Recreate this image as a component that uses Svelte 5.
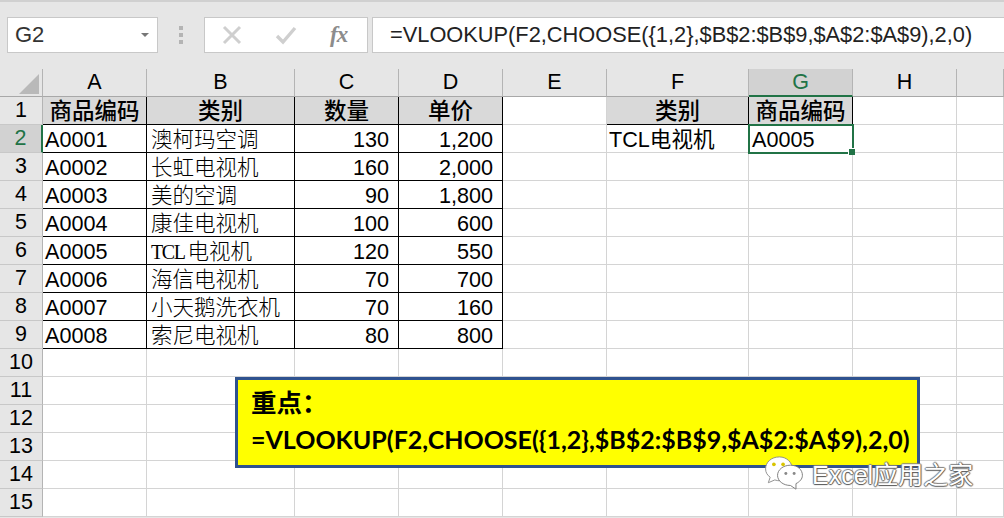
<script>
	const columns = ['A', 'B', 'C', 'D', 'E', 'F', 'G', 'H', ''];
	const products = [
		['A0001', '澳柯玛空调', '130', '1,200'],
		['A0002', '长虹电视机', '160', '2,000'],
		['A0003', '美的空调', '90', '1,800'],
		['A0004', '康佳电视机', '100', '600'],
		['A0005', 'TCL电视机', '120', '550'],
		['A0006', '海信电视机', '70', '700'],
		['A0007', '小天鹅洗衣机', '70', '160'],
		['A0008', '索尼电视机', '80', '800']
	];
	const headers = ['商品编码', '类别', '数量', '单价'];

	// build one row of nine cells from whatever the sheet holds there
	const cellsFor = (r) => {
		const cells = columns.map(() => ({ text: '', cls: '' }));
		if (r === 1) {
			headers.forEach((h, i) => (cells[i] = { text: h, cls: 'head ruled' }));
			cells[5] = { text: '类别', cls: 'head ruled' };
			cells[6] = { text: '商品编码', cls: 'head ruled' };
		}
		if (r >= 2 && r <= 9) {
			const p = products[r - 2];
			cells[0] = { text: p[0], cls: 'ruled' };
			cells[1] = { text: p[1], cls: 'ruled song' };
			cells[2] = { text: p[2], cls: 'ruled num' };
			cells[3] = { text: p[3], cls: 'ruled num' };
		}
		if (r === 2) {
			cells[5] = { text: 'TCL电视机', cls: '' };
			cells[6] = { text: 'A0005', cls: 'active' };
		}
		return cells;
	};
	const rows = Array.from({ length: 15 }, (_, i) => i + 1);
	// the category column sets its latin letters small, half width
	const latinLead = (text) => text.match(/^[A-Z]+/)?.[0] ?? '';
</script>

<div class="app">
	<div class="toolbar">
		<div class="namebox">
			<span>G2</span>
			<i class="caret"></i>
		</div>
		<div class="grip"><b></b><b></b><b></b></div>
		<div class="fxbox">
			<svg width="24" height="20" viewBox="0 0 24 20">
				<path d="M4 2 L20 18 M20 2 L4 18" stroke="#cfcfcf" stroke-width="3" fill="none" />
			</svg>
			<svg width="24" height="20" viewBox="0 0 24 20">
				<path d="M3 11 L9 17 L21 3" stroke="#cfcfcf" stroke-width="3.4" fill="none" />
			</svg>
			<span class="fx">fx</span>
		</div>
		<div class="formula">=VLOOKUP(F2,CHOOSE(&#123;1,2&#125;,$B$2:$B$9,$A$2:$A$9),2,0)</div>
	</div>

	<div class="sheet">
		<div class="corner"><i></i></div>
		{#each columns as c}
			<div class="colhead" class:sel={c === 'G'}>{c}</div>
		{/each}
		{#each rows as r}
			<div class="rowhead" class:sel={r === 2}>{r}</div>
			{#each cellsFor(r) as cell}
				{#if cell.cls.includes('song') && latinLead(cell.text)}
					<div class="cell {cell.cls}"><span class="latin">{latinLead(cell.text)}</span>{cell.text.slice(latinLead(cell.text).length)}</div>
				{:else}
					<div class="cell {cell.cls}">{cell.text}</div>
				{/if}
			{/each}
		{/each}
	</div>

	<div class="note">
		<div class="note-title">重点：</div>
		<div class="note-formula">=VLOOKUP(F2,CHOOSE(&#123;1,2&#125;,$B$2:$B$9,$A$2:$A$9),2,0)</div>
	</div>

	<div class="mark">
		<svg width="40" height="35" viewBox="0 0 42 38">
			<path d="M16 1 C7 1 1 7 1 14 C1 18 3 21 6 23 L4 29 L11 26 C13 26.500 15 27 17 27 C25 27 30 21 30 14 C30 7 24 1 16 1 Z" fill="#fff" stroke="#8a8a8a" />
			<path d="M28 10 C20 10 14 15 14 21 C14 27 20 32 28 32 L34 36 L34 30 C38 28 41 25 41 21 C41 15 36 10 28 10 Z" fill="#fff" stroke="#777" />
			<circle cx="10" cy="9" r="2" fill="#d8c400" />
			<circle cx="20" cy="9" r="2" fill="#d8c400" />
			<circle cx="23" cy="19" r="1.600" fill="#888" />
			<circle cx="32" cy="19" r="1.600" fill="#888" />
		</svg>
		<span>Excel应用之家</span>
	</div>
</div>

<style>
	:global(body) {
		margin: 0;
	}

	.app {
		position: relative;
		width: 1004px;
		height: 518px;
		overflow: hidden;
		background: #e6e6e6;
		border-top: 2px solid #d0d0d0;
		box-sizing: border-box;
		font-family: 'Liberation Sans', 'Noto Sans CJK SC', sans-serif;
		color: #000;
	}

	/* formula bar */
	.toolbar {
		display: flex;
		align-items: stretch;
		height: 36px;
		margin: 15px 0 16px 7px;
	}

	.namebox {
		width: 151px;
		box-sizing: border-box;
		background: #fff;
		border: 1px solid #c8c8c8;
		display: flex;
		align-items: center;
		justify-content: space-between;
		padding: 0 8px 0 7px;
		font-size: 22px;
		color: #333;
	}

	.caret {
		width: 0;
		height: 0;
		border-left: 4px solid transparent;
		border-right: 4px solid transparent;
		border-top: 4px solid #777;
	}

	.grip {
		width: 46px;
		display: flex;
		flex-direction: column;
		align-items: center;
		justify-content: center;
		gap: 3px;
	}

	.grip b {
		width: 4px;
		height: 4px;
		background: #b4b4b4;
	}

	.fxbox {
		width: 164px;
		box-sizing: border-box;
		background: #fff;
		border: 1px solid #c8c8c8;
		display: flex;
		align-items: center;
		gap: 30px;
		padding-left: 15px;
	}

	.fx {
		font-family: 'Liberation Serif', serif;
		font-style: italic;
		font-weight: bold;
		font-size: 23px;
		color: #8c8c8c;
		margin-left: 2px;
		letter-spacing: -1px;
	}

	.formula {
		flex: 1;
		margin-left: 4px;
		background: #fff;
		border: 1px solid #c8c8c8;
		border-right: 0;
		padding-left: 17px;
		font-size: 21.800px;
		line-height: 33px;
		color: #222;
		white-space: nowrap;
	}

	/* sheet */
	.sheet {
		display: grid;
		grid-template-columns: 43px 104px 148px 104px 104px 104px 142px 104px 104px 47px;
		grid-template-rows: 28px repeat(15, 28px);
		background: #fff;
	}

	.corner {
		background: #e6e6e6;
		border-right: 1px solid #b4b4b4;
		border-bottom: 1px solid #a8a8a8;
		box-sizing: border-box;
		position: relative;
	}

	.corner i {
		position: absolute;
		right: 3px;
		bottom: 2px;
		width: 0;
		height: 0;
		border-left: 20px solid transparent;
		border-bottom: 20px solid #b9b9b9;
	}

	.colhead,
	.rowhead {
		background: #e6e6e6;
		box-sizing: border-box;
		display: flex;
		align-items: center;
		justify-content: center;
		font-size: 21.500px;
	}

	.colhead {
		border-right: 1px solid #b4b4b4;
		border-bottom: 1px solid #a8a8a8;
	}

	.rowhead {
		border-right: 1px solid #b4b4b4;
		border-bottom: 1px solid #c8c8c8;
	}

	.colhead.sel,
	.rowhead.sel {
		background: #d2d2d2;
		color: #217346;
	}

	.colhead.sel {
		border-bottom: 2px solid #217346;
	}

	.rowhead.sel {
		border-right: 2px solid #217346;
	}

	.cell {
		box-sizing: border-box;
		border-right: 1px solid #d4d4d4;
		border-bottom: 1px solid #d4d4d4;
		font-size: 21.600px;
		line-height: 30px;
		padding: 0 2px;
		white-space: nowrap;
		overflow: visible;
	}

	.ruled {
		border-right: 1px solid #000;
		border-bottom: 1px solid #000;
	}

	.head {
		background: #d9d9d9;
		text-align: center;
		font-size: 22.500px;
		font-weight: 500;
		padding: 0;
	}

	.song {
		font-size: 21.500px;
		font-weight: 300;
		padding-left: 4px;
	}

	.latin {
		font-family: 'Liberation Serif', serif;
		font-size: 20px;
		font-weight: 400;
		letter-spacing: -1.400px;
		margin-right: 3px;
	}

	.num {
		text-align: right;
		padding-right: 9px;
	}

	.active {
		position: relative;
		outline: 2px solid #217346;
		outline-offset: -1px;
		padding-left: 3px;
	}

	.active::after {
		content: '';
		position: absolute;
		right: -3px;
		bottom: -3px;
		width: 6px;
		height: 6px;
		background: #217346;
		border: 1px solid #fff;
		border-width: 1px 0 0 1px;
	}

	/* callout pasted over the grid */
	.note {
		position: absolute;
		left: 235px;
		top: 375px;
		width: 685px;
		height: 91px;
		box-sizing: border-box;
		background: #ffff00;
		border: 3px solid #2f528f;
		padding: 3px 13px;
		font-weight: bold;
		font-family: Lato, 'Noto Sans CJK SC', sans-serif;
		white-space: nowrap;
	}

	.note-title {
		font-size: 25.500px;
		line-height: 38px;
	}

	.note-formula {
		font-size: 25px;
		line-height: 37px;
	}

	.mark {
		position: absolute;
		left: 764px;
		top: 453px;
		display: flex;
		align-items: center;
		gap: 8px;
		font-size: 25px;
		color: #fff;
		text-shadow:
			1px 0 1px #555,
			0 1px 1px #555,
			-1px 0 1px #888,
			0 -1px 1px #888;
	}
</style>
